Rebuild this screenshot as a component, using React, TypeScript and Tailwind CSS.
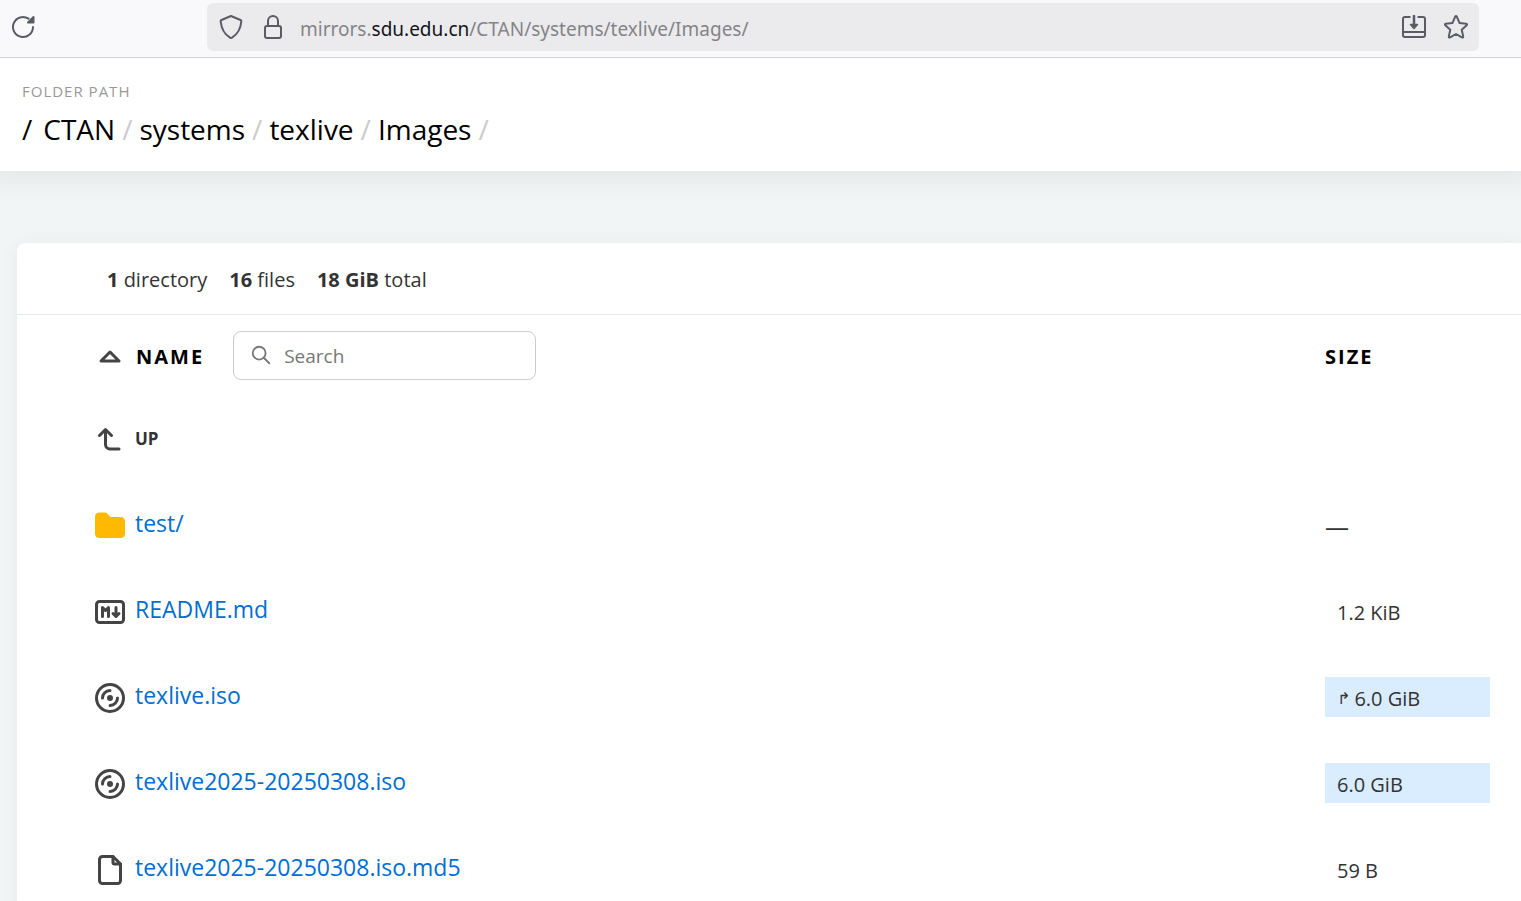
import React from 'react';
import clsx from 'clsx';

type Kind = 'folder' | 'markdown' | 'disc' | 'file';

interface Entry {
  name: string;
  kind: Kind;
  size?: string;
  symlink?: boolean;
  percent: number;
}

const crumbs = ['CTAN', 'systems', 'texlive', 'Images'];

const entries: Entry[] = [
  { name: 'test/', kind: 'folder', percent: 0 },
  { name: 'README.md', kind: 'markdown', size: '1.2 KiB', percent: 0 },
  { name: 'texlive.iso', kind: 'disc', size: '6.0 GiB', symlink: true, percent: 100 },
  { name: 'texlive2025-20250308.iso', kind: 'disc', size: '6.0 GiB', percent: 100 },
  { name: 'texlive2025-20250308.iso.md5', kind: 'file', size: '59 B', percent: 0 },
];

const Icon: React.FC<{ className?: string; strokeWidth?: number; children: React.ReactNode }> = ({
  className = 'mt-0.5 size-9 text-[#444]',
  strokeWidth = 2,
  children,
}) => (
  <svg
    className={clsx('shrink-0', className)}
    viewBox="0 0 24 24"
    fill="none"
    stroke="currentColor"
    strokeWidth={strokeWidth}
    strokeLinecap="round"
    strokeLinejoin="round"
    aria-hidden="true"
  >
    {children}
  </svg>
);

const EntryIcon: React.FC<{ kind: Kind }> = ({ kind }) => {
  if (kind === 'folder')
    return (
      <Icon className="mt-0.5 size-9 text-[#ffb900]">
        <path
          fill="currentColor"
          stroke="none"
          d="M9 3a1 1 0 0 1 .608 .206l.1 .087l2.706 2.707h6.586a3 3 0 0 1 2.995 2.824l.005 .176v8a3 3 0 0 1 -2.824 2.995l-.176 .005h-14a3 3 0 0 1 -2.995 -2.824l-.005 -.176v-11a3 3 0 0 1 2.824 -2.995l.176 -.005h4z"
        />
      </Icon>
    );
  if (kind === 'markdown')
    return (
      <Icon>
        <rect x="3" y="5" width="18" height="14" rx="2" />
        <path d="M7 15v-6l2 2l2 -2v6" />
        <path d="M14 13l2 2l2 -2m-2 2v-6" />
      </Icon>
    );
  if (kind === 'disc')
    return (
      <Icon>
        <circle cx="12" cy="12" r="9" />
        <circle cx="12" cy="12" r="1" />
        <path d="M7 12a5 5 0 0 1 5 -5" />
        <path d="M12 17a5 5 0 0 0 5 -5" />
      </Icon>
    );
  return (
    <Icon>
      <path d="M14 3v4a1 1 0 0 0 1 1h4" />
      <path d="M17 21h-10a2 2 0 0 1 -2 -2v-14a2 2 0 0 1 2 -2h7l5 5v11a2 2 0 0 1 -2 2z" />
    </Icon>
  );
};

const BrowserBar = () => (
  <div className="relative z-10 flex h-[58px] items-start border-b border-[#d3d3d9] bg-[#f9f9fb] pt-[3px] pr-[42px] pl-[11px] text-[#5b5b66]">
    <button type="button" aria-label="Reload" className="flex h-12 items-center">
      <Icon className="size-6">
        <path d="M22 12a10 10 0 1 1 -4.500 -8.350" />
        <path d="M22.500 2v5.500h-5.500z" fill="currentColor" />
      </Icon>
    </button>
    <div className="ml-[172px] flex h-12 min-w-0 flex-1 items-center rounded-md bg-[#ebebed] pr-[11px] pl-3">
      <button type="button" aria-label="Tracking protection">
        <Icon className="size-6">
          <path d="M12 1l9.500 4c.6 .25 .9 .8 .8 1.500c-.6 7 -3.500 12.500 -9.300 16.200q-1 .6 -2 0c-5.800 -3.700 -8.700 -9.200 -9.300 -16.200c-.1 -.7 .2 -1.250 .8 -1.500z" />
        </Icon>
      </button>
      <button type="button" aria-label="Connection secure" className="ml-[18px]">
        <Icon className="size-6">
          <rect x="4" y="11" width="16" height="12" rx="2" />
          <path d="M7 11v-5a5 5 0 0 1 10 0v5" />
        </Icon>
      </button>
      <div
        role="textbox"
        aria-label="Address"
        className="ml-[15px] flex-1 truncate pt-1 font-['Noto_Sans',sans-serif] text-[19px] leading-8 text-[#848487]"
      >
        mirrors.<span className="text-[#15141a]">sdu.edu.cn</span>/CTAN/systems/texlive/Images/
      </div>
      <button type="button" aria-label="Install" className="ml-4">
        <Icon className="size-6" strokeWidth={2}>
          <path d="M8.500 2h-5.500a2 2 0 0 0 -2 2v16a2 2 0 0 0 2 2h18a2 2 0 0 0 2 -2v-16a2 2 0 0 0 -2 -2h-5.500" strokeLinecap="butt" />
          <path d="M1 17h22" />
          <path d="M12 1v10" strokeWidth="2.5" />
          <path d="M8.500 9.500h7l-3.500 4z" fill="currentColor" strokeWidth="1.5" />
        </Icon>
      </button>
      <button type="button" aria-label="Bookmark" className="ml-[18px]">
        <Icon className="size-6">
          <path d="M11.100 1.800q.9 -1.600 1.800 0l2.700 6.300l6.600 .6q1.500 .3 .5 1.500l-5 4.500l1.500 6.700q.1 1.500 -1.300 1l-5.900 -3.400l-5.900 3.400q-1.400 .5 -1.300 -1l1.500 -6.700l-5 -4.500q-1 -1.200 .5 -1.500l6.600 -.6z" />
        </Icon>
      </button>
    </div>
  </div>
);

const Summary = () => (
  <div className="flex h-[72px] items-center gap-[22px] border-b border-[#e5e9ea] pt-0.5 pl-[90px] text-[20px]">
    <span>
      <b>1</b> directory
    </span>
    <span>
      <b>16</b> files
    </span>
    <span>
      <b>18 GiB</b> total
    </span>
  </div>
);

const SizeCell: React.FC<{ entry: Entry }> = ({ entry }) => {
  if (!entry.size) return <div className="pt-1 text-2xl">—</div>;
  return (
    <div className="relative h-10">
      <div className="absolute inset-y-0 left-0 bg-[#daedff]" style={{ width: `${entry.percent}%` }} />
      <div className="relative flex h-10 items-center gap-1 px-3 pt-1">
        {entry.symlink && <span className="font-['DejaVu_Sans'] text-base">↱</span>}
        {entry.size}
      </div>
    </div>
  );
};

const Listing = () => (
  <table className="w-full table-fixed text-left">
    <colgroup>
      <col />
      <col className="w-[196px]" />
    </colgroup>
    <thead>
      <tr className="h-[81px]">
        <th className="pl-[75px]">
          <div className="flex items-center">
            <a href="#sort-name" className="flex items-center gap-2 pt-0.5 text-[20px] tracking-[2px] text-black">
              <Icon>
                <path d="M18 14l-6 -6l-6 6h12" />
              </Icon>
              NAME
            </a>
            <label className="ml-[29px] flex h-[49px] w-[303px] items-center rounded-lg border border-[#ccc] px-4 font-normal">
              <Icon className="mb-0.5 size-[22px] text-[#777]">
                <path d="M10 10m-7 0a7 7 0 1 0 14 0a7 7 0 1 0 -14 0" />
                <path d="M21 21l-6 -6" />
              </Icon>
              <input
                type="text"
                aria-label="Search"
                placeholder="Search"
                className="ml-3 w-full pt-0.5 text-[19px] outline-none placeholder:text-[#777]"
              />
            </label>
          </div>
        </th>
        <th className="pt-0.5">
          <a href="#sort-size" className="text-[20px] tracking-[2px] text-black">
            SIZE
          </a>
        </th>
      </tr>
    </thead>
    <tbody>
      <tr className="h-[86px]">
        <td className="pl-[75px]" colSpan={2}>
          <a href="#up" className="flex items-center gap-[7px] text-[17px] font-bold">
            <Icon>
              <path d="M18 18h-6a3 3 0 0 1 -3 -3v-10l-4 4m8 0l-4 -4" />
            </Icon>
            UP
          </a>
        </td>
      </tr>
      {entries.map((entry) => (
        <tr key={entry.name} className="h-[86px]">
          <td className="pl-[75px]">
            <a href={`#${entry.name}`} className="flex items-center gap-[7px] text-[23px] text-[#006ed3]">
              <EntryIcon kind={entry.kind} />
              <span className="pb-1">{entry.name}</span>
            </a>
          </td>
          <td className="pr-[31px] text-[20px]">
            <SizeCell entry={entry} />
          </td>
        </tr>
      ))}
    </tbody>
  </table>
);

export default function App() {
  return (
    <div className="min-h-screen overflow-hidden bg-[#f1f5f6] font-['Open_Sans',sans-serif] text-[#333]">
      <BrowserBar />
      <header className="h-[113px] bg-white px-[22px] pt-5 shadow-[0_0_24px_12px_rgba(0,0,0,0.05)]">
        <p className="text-[15px] leading-[26px] tracking-[1px] text-[#999]">FOLDER PATH</p>
        <nav className="flex gap-[7px] text-[28px] leading-[50px] text-black">
          <a href="#root" className="mr-1">
            /
          </a>
          {crumbs.map((crumb) => (
            <React.Fragment key={crumb}>
              <a href={`#${crumb}`}>{crumb}</a>
              <span className="text-[#ccc]">/</span>
            </React.Fragment>
          ))}
        </nav>
      </header>
      <main className="pt-[72px] pl-[17px]">
        <div className="rounded-tl-lg bg-white shadow-[0_2px_20px_rgba(0,0,0,0.05)]">
          <Summary />
          <Listing />
        </div>
      </main>
    </div>
  );
}
